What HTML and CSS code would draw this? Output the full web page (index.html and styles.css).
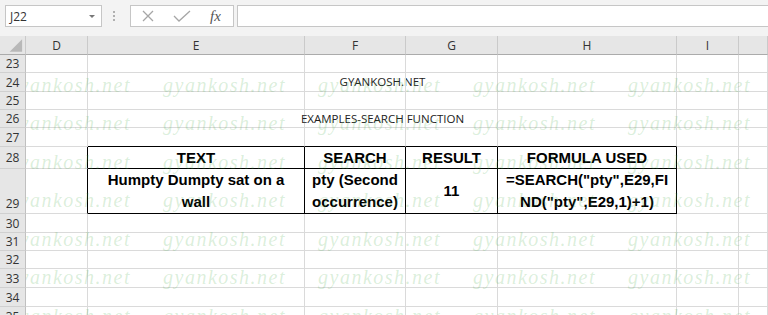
FILE: index.html
```html
<!DOCTYPE html>
<html>
<head>
    <meta charset="utf-8">
    <title>SEARCH function example</title>
    <link rel="stylesheet" href="styles.css">
</head>
<body>
    <div class="toolbar">
        <div class="namebox"><span>J22</span><span class="caret"></span></div>
        <div class="grip"><i></i><i></i><i></i></div>
        <div class="fxbox">
            <svg class="ico" width="14" height="12" viewBox="0 0 14 12"><path d="M2 1 L12 11 M12 1 L2 11" stroke="#a6a6a6" stroke-width="1.3" fill="none"/></svg>
            <svg class="ico" width="18" height="12" viewBox="0 0 18 12"><path d="M1 6 L6 11 L17 1" stroke="#a6a6a6" stroke-width="1.3" fill="none"/></svg>
            <span class="fx">fx</span>
        </div>
        <div class="formula"></div>
    </div>

    <div class="sheet">
        <!-- column headers -->
        <div class="ch corner"><svg width="26" height="19" viewBox="0 0 26 19"><polygon points="23,3 23,16 10,16" fill="#b8b8b8"/></svg></div>
        <div class="ch">D</div><div class="ch">E</div><div class="ch">F</div><div class="ch">G</div><div class="ch">H</div><div class="ch">I</div><div class="ch"></div>

        <div class="rh">23</div><div class="c"></div><div class="c"></div><div class="c"></div><div class="c"></div><div class="c"></div><div class="c"></div><div class="c"></div>
        <div class="rh">24</div><div class="c"></div><div class="c"><span class="across">GYANKOSH.NET</span></div><div class="c"></div><div class="c"></div><div class="c"></div><div class="c"></div><div class="c"></div>
        <div class="rh">25</div><div class="c"></div><div class="c"></div><div class="c"></div><div class="c"></div><div class="c"></div><div class="c"></div><div class="c"></div>
        <div class="rh">26</div><div class="c"></div><div class="c"><span class="across">EXAMPLES-SEARCH FUNCTION</span></div><div class="c"></div><div class="c"></div><div class="c"></div><div class="c"></div><div class="c"></div>
        <div class="rh">27</div><div class="c"></div><div class="c tt"></div><div class="c tt"></div><div class="c tt"></div><div class="c tt"></div><div class="c"></div><div class="c"></div>

        <div class="rh">28</div><div class="c tl"></div>
        <div class="c t">TEXT</div>
        <div class="c t">SEARCH</div>
        <div class="c t">RESULT</div>
        <div class="c t">FORMULA USED</div>
        <div class="c"></div><div class="c"></div>

        <div class="rh bottom">29</div><div class="c tl"></div>
        <div class="c t">Humpty Dumpty sat on a<br>wall</div>
        <div class="c t">pty (Second<br>occurrence)</div>
        <div class="c t">11</div>
        <div class="c t">=SEARCH("pty",E29,FI<br>ND("pty",E29,1)+1)</div>
        <div class="c"></div><div class="c"></div>

        <div class="rh">30</div><div class="c"></div><div class="c"></div><div class="c"></div><div class="c"></div><div class="c"></div><div class="c"></div><div class="c"></div>
        <div class="rh">31</div><div class="c"></div><div class="c"></div><div class="c"></div><div class="c"></div><div class="c"></div><div class="c"></div><div class="c"></div>
        <div class="rh">32</div><div class="c"></div><div class="c"></div><div class="c"></div><div class="c"></div><div class="c"></div><div class="c"></div><div class="c"></div>
        <div class="rh">33</div><div class="c"></div><div class="c"></div><div class="c"></div><div class="c"></div><div class="c"></div><div class="c"></div><div class="c"></div>
        <div class="rh">34</div><div class="c"></div><div class="c"></div><div class="c"></div><div class="c"></div><div class="c"></div><div class="c"></div><div class="c"></div>
        <div class="rh">35</div><div class="c"></div><div class="c"></div><div class="c"></div><div class="c"></div><div class="c"></div><div class="c"></div><div class="c"></div>

        <!-- watermark over the cells -->
        <div class="watermark">
            <div class="wm-row r1"><span>gyankosh.net</span><span>gyankosh.net</span><span>gyankosh.net</span><span>gyankosh.net</span><span>gyankosh.net</span></div>
            <div class="wm-row r2"><span>gyankosh.net</span><span>gyankosh.net</span><span>gyankosh.net</span><span>gyankosh.net</span><span>gyankosh.net</span></div>
            <div class="wm-row r3"><span>gyankosh.net</span><span>gyankosh.net</span><span>gyankosh.net</span><span>gyankosh.net</span><span>gyankosh.net</span></div>
            <div class="wm-row r4"><span>gyankosh.net</span><span>gyankosh.net</span><span>gyankosh.net</span><span>gyankosh.net</span><span>gyankosh.net</span></div>
            <div class="wm-row r5"><span>gyankosh.net</span><span>gyankosh.net</span><span>gyankosh.net</span><span>gyankosh.net</span><span>gyankosh.net</span></div>
            <div class="wm-row r6"><span>gyankosh.net</span><span>gyankosh.net</span><span>gyankosh.net</span><span>gyankosh.net</span><span>gyankosh.net</span></div>
            <div class="wm-row r7"><span>gyankosh.net</span><span>gyankosh.net</span><span>gyankosh.net</span><span>gyankosh.net</span><span>gyankosh.net</span></div>
        </div>
    </div>
</body>
</html>
```

FILE: styles.css
```css
body {
    margin: 0;
    background: #fff;
    font-family: "Open Sans", "Noto Sans", sans-serif;
    color: #222;
    overflow: hidden;
}

/* formula bar */
.toolbar {
    height: 36px;
    box-sizing: border-box;
    padding: 5px 0 0 5px;
    background: #f3f3f3;
    display: flex;
    align-items: flex-start;
}

.namebox {
    width: 97px;
    height: 22px;
    box-sizing: border-box;
    border: 1px solid #c6c6c6;
    background: #fff;
    display: flex;
    align-items: center;
    justify-content: space-between;
    padding: 0 6px 0 4px;
    font-size: 12px;
    color: #333;
}

.caret {
    width: 0;
    height: 0;
    border-left: 3px solid transparent;
    border-right: 3px solid transparent;
    border-top: 3px solid #777;
}

.grip {
    margin: 6px 0 0 11px;
    width: 3px;
    display: flex;
    flex-direction: column;
    gap: 2px;
}

.grip i {
    display: block;
    width: 2px;
    height: 2px;
    background: #b0b0b0;
}

.fxbox {
    margin-left: 14px;
    width: 104px;
    height: 22px;
    box-sizing: border-box;
    border: 1px solid #c6c6c6;
    background: #fff;
    display: flex;
    align-items: center;
    padding-left: 10px;
}

.ico {
    display: block;
}

.ico + .ico {
    margin-left: 18px;
}

.fx {
    margin-left: 19px;
    font-family: "Liberation Serif", serif;
    font-style: italic;
    font-size: 15px;
    color: #555;
}

.formula {
    margin-left: 3px;
    flex: 1;
    height: 22px;
    box-sizing: border-box;
    border: 1px solid #c6c6c6;
    border-right: none;
    background: #fff;
}

/* grid */
.sheet {
    position: relative;
    display: grid;
    grid-template-columns: 26px 62px 217px 101px 92px 179px 62px 1fr;
    grid-template-rows: 19px 18px 19px 18px 18px 19px 22px 45px 19px 18px 18px 19px 19px 19px;
}

.ch {
    background: #e6e6e6;
    border-right: 1px solid #cacaca;
    border-bottom: 1px solid #ababab;
    font-size: 12px;
    color: #333;
    display: flex;
    align-items: center;
    justify-content: center;
    box-sizing: border-box;
}

.corner {
    align-items: stretch;
    justify-content: stretch;
}

.rh {
    background: #e6e6e6;
    border-right: 1px solid #c0c0c0;
    border-bottom: 1px solid #d0d0d0;
    font-size: 12px;
    color: #333;
    display: flex;
    align-items: center;
    justify-content: center;
    box-sizing: border-box;
}

.rh.bottom {
    align-items: flex-end;
    padding-bottom: 1px;
}

.c {
    border-right: 1px solid #dadada;
    border-bottom: 1px solid #dadada;
    box-sizing: border-box;
    min-width: 0;
}

.across {
    display: block;
    width: 589px;
    line-height: 18px;
    text-align: center;
    white-space: nowrap;
    font-size: 11.5px;
    color: #222;
}

/* bordered table */
.tt {
    border-bottom-color: #000;
}

.tl {
    border-right-color: #000;
}

.t {
    border-right-color: #000;
    border-bottom-color: #000;
    display: flex;
    align-items: center;
    justify-content: center;
    text-align: center;
    white-space: nowrap;
    font-family: "Liberation Sans", Arial, sans-serif;
    font-weight: bold;
    font-size: 15px;
    line-height: 22px;
    color: #000;
}

/* watermark */
.watermark {
    position: absolute;
    left: 26px;
    top: 19px;
    right: 0;
    bottom: 0;
    overflow: hidden;
    pointer-events: none;
}

.wm-row {
    position: absolute;
    left: -18px;
    display: flex;
    white-space: nowrap;
}

.wm-row span {
    width: 155px;
    flex: none;
    font-family: "Liberation Serif", serif;
    font-style: italic;
    font-size: 20px;
    line-height: 20px;
    letter-spacing: 1.5px;
    color: rgba(70, 170, 70, 0.2);
}

.r1 { top: 20px; }
.r2 { top: 58px; }
.r3 { top: 97px; }
.r4 { top: 135px; }
.r5 { top: 174px; }
.r6 { top: 212px; }
.r7 { top: 251px; }
```
